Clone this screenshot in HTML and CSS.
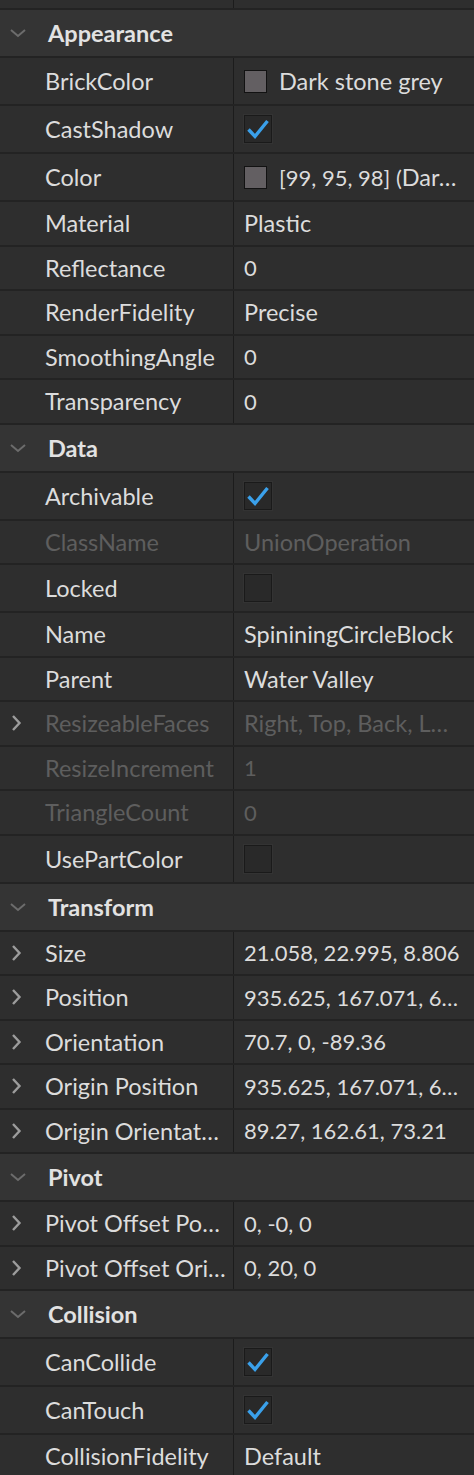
FILE: index.html
```html
<!DOCTYPE html>
<html>
<head>
<meta charset="utf-8">
<link rel="stylesheet" href="styles.css">
</head>
<body>
<div class="panel">
  <div class="row stub"><div class="name"></div><div class="value"></div></div>

  <div class="header"><span class="hchev"><svg width="18" height="10" viewBox="0 0 18 10"><polyline points="2,2 9,8 16,2" /></svg></span><span class="htext">Appearance</span></div>
  <div class="row tall"><div class="name"><span class="gut"></span>BrickColor</div><div class="value"><span class="swatch"></span>Dark stone grey</div></div>
  <div class="row tall"><div class="name"><span class="gut"></span>CastShadow</div><div class="value"><span class="check on"><svg width="28" height="28" viewBox="0 0 28 28"><polyline points="4.5,14.5 11,21.5 23.5,6" /></svg></span></div></div>
  <div class="row tall"><div class="name"><span class="gut"></span>Color</div><div class="value"><span class="swatch"></span><span class="num">[99, 95, 98] (</span>Dar…</div></div>
  <div class="row"><div class="name"><span class="gut"></span>Material</div><div class="value">Plastic</div></div>
  <div class="row"><div class="name"><span class="gut"></span>Reflectance</div><div class="value num">0</div></div>
  <div class="row"><div class="name"><span class="gut"></span>RenderFidelity</div><div class="value">Precise</div></div>
  <div class="row"><div class="name"><span class="gut"></span>SmoothingAngle</div><div class="value num">0</div></div>
  <div class="row"><div class="name"><span class="gut"></span>Transparency</div><div class="value num">0</div></div>

  <div class="header"><span class="hchev"><svg width="18" height="10" viewBox="0 0 18 10"><polyline points="2,2 9,8 16,2" /></svg></span><span class="htext">Data</span></div>
  <div class="row tall"><div class="name"><span class="gut"></span>Archivable</div><div class="value"><span class="check on"><svg width="28" height="28" viewBox="0 0 28 28"><polyline points="4.5,14.5 11,21.5 23.5,6" /></svg></span></div></div>
  <div class="row dis"><div class="name"><span class="gut"></span>ClassName</div><div class="value">UnionOperation</div></div>
  <div class="row tall"><div class="name"><span class="gut"></span>Locked</div><div class="value"><span class="check"></span></div></div>
  <div class="row"><div class="name"><span class="gut"></span>Name</div><div class="value">SpininingCircleBlock</div></div>
  <div class="row"><div class="name"><span class="gut"></span>Parent</div><div class="value">Water Valley</div></div>
  <div class="row dis"><div class="name"><span class="gut"><svg width="12" height="18" viewBox="0 0 12 18"><polyline points="3,2 9.5,9 3,16" /></svg></span>ResizeableFaces</div><div class="value">Right, Top, Back, L…</div></div>
  <div class="row dis"><div class="name"><span class="gut"></span>ResizeIncrement</div><div class="value num">1</div></div>
  <div class="row dis"><div class="name"><span class="gut"></span>TriangleCount</div><div class="value num">0</div></div>
  <div class="row tall"><div class="name"><span class="gut"></span>UsePartColor</div><div class="value"><span class="check"></span></div></div>

  <div class="header"><span class="hchev"><svg width="18" height="10" viewBox="0 0 18 10"><polyline points="2,2 9,8 16,2" /></svg></span><span class="htext">Transform</span></div>
  <div class="row"><div class="name"><span class="gut"><svg width="12" height="18" viewBox="0 0 12 18"><polyline points="3,2 9.5,9 3,16" /></svg></span>Size</div><div class="value num">21.058, 22.995, 8.806</div></div>
  <div class="row"><div class="name"><span class="gut"><svg width="12" height="18" viewBox="0 0 12 18"><polyline points="3,2 9.5,9 3,16" /></svg></span>Position</div><div class="value num">935.625, 167.071, 6…</div></div>
  <div class="row"><div class="name"><span class="gut"><svg width="12" height="18" viewBox="0 0 12 18"><polyline points="3,2 9.5,9 3,16" /></svg></span>Orientation</div><div class="value num">70.7, 0, -89.36</div></div>
  <div class="row"><div class="name"><span class="gut"><svg width="12" height="18" viewBox="0 0 12 18"><polyline points="3,2 9.5,9 3,16" /></svg></span>Origin Position</div><div class="value num">935.625, 167.071, 6…</div></div>
  <div class="row"><div class="name"><span class="gut"><svg width="12" height="18" viewBox="0 0 12 18"><polyline points="3,2 9.5,9 3,16" /></svg></span>Origin Orientat…</div><div class="value num">89.27, 162.61, 73.21</div></div>

  <div class="header"><span class="hchev"><svg width="18" height="10" viewBox="0 0 18 10"><polyline points="2,2 9,8 16,2" /></svg></span><span class="htext">Pivot</span></div>
  <div class="row"><div class="name"><span class="gut"><svg width="12" height="18" viewBox="0 0 12 18"><polyline points="3,2 9.5,9 3,16" /></svg></span>Pivot Offset Po…</div><div class="value num">0, -0, 0</div></div>
  <div class="row"><div class="name"><span class="gut"><svg width="12" height="18" viewBox="0 0 12 18"><polyline points="3,2 9.5,9 3,16" /></svg></span>Pivot Offset Ori…</div><div class="value num">0, 20, 0</div></div>

  <div class="header"><span class="hchev"><svg width="18" height="10" viewBox="0 0 18 10"><polyline points="2,2 9,8 16,2" /></svg></span><span class="htext">Collision</span></div>
  <div class="row tall"><div class="name"><span class="gut"></span>CanCollide</div><div class="value"><span class="check on"><svg width="28" height="28" viewBox="0 0 28 28"><polyline points="4.5,14.5 11,21.5 23.5,6" /></svg></span></div></div>
  <div class="row tall"><div class="name"><span class="gut"></span>CanTouch</div><div class="value"><span class="check on"><svg width="28" height="28" viewBox="0 0 28 28"><polyline points="4.5,14.5 11,21.5 23.5,6" /></svg></span></div></div>
  <div class="row"><div class="name"><span class="gut"></span>CollisionFidelity</div><div class="value">Default</div></div>
</div>
</body>
</html>
```
FILE: styles.css
```css
html, body {
  margin: 0;
  padding: 0;
  background: #2e2e2e;
}

.panel {
  width: 474px;
  font-family: Lato, "Open Sans", sans-serif;
  font-size: 23.5px;
  color: #dcdcdc;
  display: flex;
  flex-direction: column;
}

.row {
  display: grid;
  grid-template-columns: 234px 1fr;
  height: 44.5px;
  box-sizing: border-box;
  border-bottom: 2px solid #232323;
  background: #2e2e2e;
}

.row.tall {
  height: 48px;
}

.row.stub {
  height: 10px;
}

.name {
  display: flex;
  align-items: center;
  border-right: 1px solid #1c1c1c;
  white-space: nowrap;
  overflow: hidden;
}

.gut {
  width: 45px;
  flex: none;
  display: flex;
  align-items: center;
  padding-left: 10px;
  box-sizing: border-box;
}

.gut svg polyline {
  fill: none;
  stroke: #9c9c9c;
  stroke-width: 2.4;
}

.value {
  display: flex;
  align-items: center;
  padding-left: 10px;
  white-space: nowrap;
  overflow: hidden;
}

.num {
  font-size: 22px;
}

.row.dis .name,
.row.dis .value {
  color: #5e5e5e;
}

.header {
  display: flex;
  align-items: center;
  height: 48px;
  box-sizing: border-box;
  border-bottom: 2px solid #232323;
  background: #343434;
}

.hchev {
  width: 48px;
  flex: none;
  display: flex;
  align-items: center;
  padding-left: 9px;
  box-sizing: border-box;
}

.hchev svg polyline {
  fill: none;
  stroke: #6c6c6c;
  stroke-width: 2;
}

.htext {
  font-weight: 700;
  color: #e2e2e2;
}

.swatch {
  width: 21px;
  height: 21px;
  background: #635f62;
  border: 1px solid #121212;
  margin-right: 12px;
  flex: none;
}

.check {
  width: 28px;
  height: 28px;
  box-sizing: border-box;
  background: #292929;
  border: 1px solid #1a1a1a;
  box-shadow: 0 0 0 1px #333333;
  flex: none;
  display: block;
  position: relative;
}

.check svg {
  position: absolute;
  left: -1px;
  top: -1px;
}

.check svg polyline {
  fill: none;
  stroke: #3aa0ea;
  stroke-width: 3.4;
}
```
